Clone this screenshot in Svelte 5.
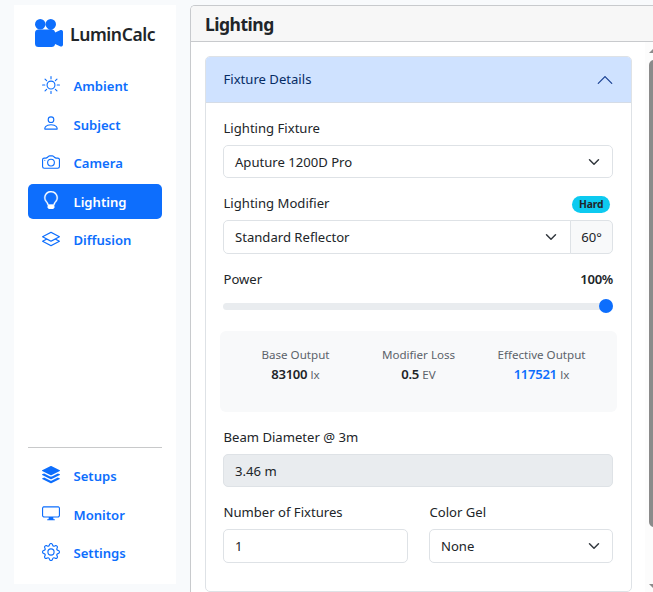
<script lang="ts">
  type NavItem = { label: string; icon: string[] };

  const mainNav: NavItem[] = [
    {
      label: 'Ambient',
      icon: [
        'M8 11a3 3 0 1 1 0-6 3 3 0 0 1 0 6m0 1a4 4 0 1 0 0-8 4 4 0 0 0 0 8M8 0a.5.5 0 0 1 .5.5v2a.5.5 0 0 1-1 0v-2A.5.5 0 0 1 8 0m0 13a.5.5 0 0 1 .5.5v2a.5.5 0 0 1-1 0v-2A.5.5 0 0 1 8 13m8-5a.5.5 0 0 1-.5.5h-2a.5.5 0 0 1 0-1h2a.5.5 0 0 1 .5.5M3 8a.5.5 0 0 1-.5.5h-2a.5.5 0 0 1 0-1h2A.5.5 0 0 1 3 8m10.657-5.657a.5.5 0 0 1 0 .707l-1.414 1.415a.5.5 0 1 1-.707-.708l1.414-1.414a.5.5 0 0 1 .707 0m-9.193 9.193a.5.5 0 0 1 0 .707L3.05 13.657a.5.5 0 0 1-.707-.707l1.414-1.414a.5.5 0 0 1 .707 0m9.193 2.121a.5.5 0 0 1-.707 0l-1.414-1.414a.5.5 0 0 1 .707-.707l1.414 1.414a.5.5 0 0 1 0 .707M4.464 4.465a.5.5 0 0 1-.707 0L2.343 3.05a.5.5 0 1 1 .707-.707l1.414 1.414a.5.5 0 0 1 0 .708',
      ],
    },
    {
      label: 'Subject',
      icon: [
        'M8 8a3 3 0 1 0 0-6 3 3 0 0 0 0 6m2-3a2 2 0 1 1-4 0 2 2 0 0 1 4 0m4 8c0 1-1 1-1 1H3s-1 0-1-1 1-4 6-4 6 3 6 4m-1-.004c-.001-.246-.154-.986-.832-1.664C11.516 10.68 10.289 10 8 10s-3.516.68-4.168 1.332c-.678.678-.83 1.418-.832 1.664z',
      ],
    },
    {
      label: 'Camera',
      icon: [
        'M15 12a1 1 0 0 1-1 1H2a1 1 0 0 1-1-1V6a1 1 0 0 1 1-1h1.172a3 3 0 0 0 2.12-.879l.83-.828A1 1 0 0 1 6.827 3h2.344a1 1 0 0 1 .707.293l.828.828A3 3 0 0 0 12.828 5H14a1 1 0 0 1 1 1zM2 4a2 2 0 0 0-2 2v6a2 2 0 0 0 2 2h12a2 2 0 0 0 2-2V6a2 2 0 0 0-2-2h-1.172a2 2 0 0 1-1.414-.586l-.828-.828A2 2 0 0 0 9.172 2H6.828a2 2 0 0 0-1.414.586l-.828.828A2 2 0 0 1 3.172 4z',
        'M8 11a2.5 2.5 0 1 1 0-5 2.5 2.5 0 0 1 0 5m0 1a3.5 3.5 0 1 0 0-7 3.5 3.5 0 0 0 0 7M3 6.5a.5.5 0 1 1-1 0 .5.5 0 0 1 1 0',
      ],
    },
    {
      label: 'Lighting',
      icon: [
        'M2 6a6 6 0 1 1 10.174 4.31c-.203.196-.359.4-.453.619l-.762 1.769A.5.5 0 0 1 10.5 13a.5.5 0 0 1 0 1 .5.5 0 0 1 0 1l-.224.447a1 1 0 0 1-.894.553H6.618a1 1 0 0 1-.894-.553L5.5 15a.5.5 0 0 1 0-1 .5.5 0 0 1 0-1 .5.5 0 0 1-.46-.302l-.761-1.77a2 2 0 0 0-.453-.618A5.98 5.98 0 0 1 2 6m6-5a5 5 0 0 0-3.479 8.592c.263.254.514.564.676.941L5.83 12h4.342l.632-1.467c.162-.377.413-.687.676-.941A5 5 0 0 0 8 1',
      ],
    },
    {
      label: 'Diffusion',
      icon: [
        'M8.235 1.559a.5.5 0 0 0-.47 0l-7.5 4a.5.5 0 0 0 0 .882L3.188 8 .264 9.559a.5.5 0 0 0 0 .882l7.5 4a.5.5 0 0 0 .47 0l7.5-4a.5.5 0 0 0 0-.882L12.813 8l2.922-1.559a.5.5 0 0 0 0-.882zm3.515 7.008L14.438 10 8 13.433 1.562 10 4.25 8.567l3.515 1.874a.5.5 0 0 0 .47 0zM8 9.433 1.562 6 8 2.567 14.438 6z',
      ],
    },
  ];

  const footerNav: NavItem[] = [
    {
      label: 'Setups',
      icon: [
        'm14.12 10.163 1.715.858c.22.11.22.424 0 .534L8.267 15.34a.6.6 0 0 1-.534 0L.165 11.555a.299.299 0 0 1 0-.534l1.716-.858 5.317 2.659c.505.252 1.1.252 1.604 0l5.317-2.66zM7.733.063a.6.6 0 0 1 .534 0l7.568 3.784a.3.3 0 0 1 0 .535L8.267 8.165a.6.6 0 0 1-.534 0L.165 4.382a.299.299 0 0 1 0-.535z',
        'm14.12 6.576 1.715.858c.22.11.22.424 0 .534l-7.568 3.784a.6.6 0 0 1-.534 0L.165 7.968a.299.299 0 0 1 0-.534l1.716-.858 5.317 2.659c.505.252 1.1.252 1.604 0z',
      ],
    },
    {
      label: 'Monitor',
      icon: [
        'M0 4s0-2 2-2h12s2 0 2 2v6s0 2-2 2h-4q0 1 .25 1.5H11a.5.5 0 0 1 0 1H5a.5.5 0 0 1 0-1h.75Q6 13 6 12H2s-2 0-2-2zm1.398-.855a.76.76 0 0 0-.254.302A1.5 1.5 0 0 0 1 4.01V10c0 .325.078.502.145.602q.105.156.302.254a1.5 1.5 0 0 0 .538.143L2.01 11H14c.325 0 .502-.078.602-.145a.76.76 0 0 0 .254-.302 1.5 1.5 0 0 0 .143-.538L15 9.99V4c0-.325-.078-.502-.145-.602a.76.76 0 0 0-.302-.254A1.5 1.5 0 0 0 13.99 3H2c-.325 0-.502.078-.602.145',
      ],
    },
    {
      label: 'Settings',
      icon: [
        'M8 4.754a3.246 3.246 0 1 0 0 6.492 3.246 3.246 0 0 0 0-6.492M5.754 8a2.246 2.246 0 1 1 4.492 0 2.246 2.246 0 0 1-4.492 0',
        'M9.796 1.343c-.527-1.79-3.065-1.79-3.592 0l-.094.319a.873.873 0 0 1-1.255.52l-.292-.16c-1.64-.892-3.433.902-2.54 2.541l.159.292a.873.873 0 0 1-.52 1.255l-.319.094c-1.79.527-1.79 3.065 0 3.592l.319.094a.873.873 0 0 1 .52 1.255l-.16.292c-.892 1.64.901 3.434 2.541 2.54l.292-.159a.873.873 0 0 1 1.255.52l.094.319c.527 1.79 3.065 1.79 3.592 0l.094-.319a.873.873 0 0 1 1.255-.52l.292.16c1.64.893 3.434-.902 2.54-2.541l-.159-.292a.873.873 0 0 1 .52-1.255l.319-.094c1.79-.527 1.79-3.065 0-3.592l-.319-.094a.873.873 0 0 1-.52-1.255l.16-.292c.893-1.64-.902-3.433-2.541-2.54l-.292.159a.873.873 0 0 1-1.255-.52zm-2.633.283c.246-.835 1.428-.835 1.674 0l.094.319a1.873 1.873 0 0 0 2.693 1.115l.291-.16c.764-.415 1.6.42 1.184 1.185l-.159.292a1.873 1.873 0 0 0 1.116 2.692l.318.094c.835.246.835 1.428 0 1.674l-.319.094a1.873 1.873 0 0 0-1.115 2.693l.16.291c.415.764-.42 1.6-1.185 1.184l-.291-.159a1.873 1.873 0 0 0-2.693 1.116l-.094.318c-.246.835-1.428.835-1.674 0l-.094-.319a1.873 1.873 0 0 0-2.692-1.115l-.292.16c-.764.415-1.6-.42-1.184-1.185l.159-.291A1.873 1.873 0 0 0 1.945 8.93l-.319-.094c-.835-.246-.835-1.428 0-1.674l.319-.094A1.873 1.873 0 0 0 3.06 4.377l-.16-.292c-.415-.764.42-1.6 1.185-1.184l.292.159a1.873 1.873 0 0 0 2.692-1.115z',
      ],
    },
  ];

  const stats = [
    { label: 'Base Output', value: '83100', unit: 'lx', accent: false },
    { label: 'Modifier Loss', value: '0.5', unit: 'EV', accent: false },
    { label: 'Effective Output', value: '117521', unit: 'lx', accent: true },
  ];

  let active = $state('Lighting');
  let power = $state(100);
  let fixtures = $state(1);
</script>

{#snippet navLink(item: NavItem)}
  <button
    type="button"
    class="nav-link"
    class:active={active === item.label}
    onclick={() => (active = item.label)}
  >
    <svg viewBox="0 0 16 16" aria-hidden="true">
      {#each item.icon as d}
        <path {d} />
      {/each}
    </svg>
    <span>{item.label}</span>
  </button>
{/snippet}

{#snippet chevron()}
  <svg class="chevron" viewBox="0 0 16 16" aria-hidden="true">
    <path d="m2 5 6 6 6-6" />
  </svg>
{/snippet}

<div class="app">
  <aside class="sidebar">
    <div class="brand">
      <svg viewBox="0 0 16 16" aria-hidden="true">
        <path d="M6 3a3 3 0 1 1-6 0 3 3 0 0 1 6 0" />
        <path
          d="M9 6a3 3 0 1 1 0-6 3 3 0 0 1 0 6M9 6h.5a2 2 0 0 1 1.983 1.738l3.11-1.382A1 1 0 0 1 16 7.269v7.462a1 1 0 0 1-1.406.913l-3.111-1.382A2 2 0 0 1 9.5 16H2a2 2 0 0 1-2-2V8a2 2 0 0 1 2-2z"
        />
      </svg>
      <span>LuminCalc</span>
    </div>
    <nav>
      {#each mainNav as item}
        {@render navLink(item)}
      {/each}
    </nav>
    <nav class="nav-footer">
      {#each footerNav as item}
        {@render navLink(item)}
      {/each}
    </nav>
  </aside>

  <main class="card">
    <h1 class="card-header">Lighting</h1>
    <div class="scroll">
      <section class="accordion">
        <header class="accordion-header">
          <span>Fixture Details</span>
          <svg viewBox="0 0 16 16" aria-hidden="true"><path d="m2 11 6-6 6 6" /></svg>
        </header>
        <div class="accordion-body">
          <div class="label">Lighting Fixture</div>
          <div class="control select">
            <span>Aputure 1200D Pro</span>
            {@render chevron()}
          </div>

          <div class="label">
            <span>Lighting Modifier</span>
            <span class="badge">Hard</span>
          </div>
          <div class="input-group">
            <div class="control select">
              <span>Standard Reflector</span>
              {@render chevron()}
            </div>
            <span class="addon">60°</span>
          </div>

          <div class="label">
            <span>Power</span>
            <strong>{power}%</strong>
          </div>
          <input class="range" type="range" min="0" max="100" aria-label="Power" bind:value={power} />

          <div class="stats">
            {#each stats as stat}
              <div class="stat">
                <div class="stat-label">{stat.label}</div>
                <div class="stat-value">
                  <strong class:accent={stat.accent}>{stat.value}</strong>
                  <small>{stat.unit}</small>
                </div>
              </div>
            {/each}
          </div>

          <div class="label">Beam Diameter @ 3m</div>
          <div class="control readonly">3.46 m</div>

          <div class="row">
            <div>
              <div class="label">Number of Fixtures</div>
              <input class="control tall" type="text" aria-label="Number of Fixtures" bind:value={fixtures} />
            </div>
            <div>
              <div class="label">Color Gel</div>
              <div class="control select tall">
                <span>None</span>
                {@render chevron()}
              </div>
            </div>
          </div>
        </div>
      </section>
      <div class="scrollbar">
        <span class="arrow up"></span>
        <span class="thumb"></span>
        <span class="arrow down"></span>
      </div>
    </div>
  </main>
</div>

<style>
  :global(body) {
    background: #f8fafc;
    overflow: hidden;
  }

  .app,
  .app * {
    box-sizing: border-box;
  }

  .app {
    display: flex;
    gap: 14px;
    height: 592px;
    padding: 5px 0 0 14px;
    overflow: hidden;
    font-family: 'Noto Sans', 'Open Sans', sans-serif;
    font-size: 13.1px;
    color: #212529;
  }

  .sidebar {
    display: flex;
    flex-direction: column;
    flex: none;
    width: 162px;
    height: 579px;
    padding: 14px;
    background: #fff;
  }

  .brand {
    display: flex;
    align-items: center;
    gap: 7px;
    height: 28px;
    margin: 0 0 21.5px 7px;
    font-size: 17.5px;
    font-weight: 600;
    letter-spacing: -0.4px;
  }

  .brand span {
    padding-top: 2px;
  }

  .brand svg {
    width: 28px;
    height: 28px;
    fill: #0d6efd;
  }

  nav {
    display: flex;
    flex-direction: column;
    gap: 3.5px;
  }

  .nav-footer {
    margin: auto 0 -0.5px;
    padding-top: 10.5px;
    border-top: 1px solid #c8c9ca;
  }

  .nav-link {
    display: flex;
    align-items: center;
    gap: 13.5px;
    height: 35px;
    padding: 0 14px;
    border: 0;
    border-radius: 5px;
    background: transparent;
    color: #0d6efd;
    font: inherit;
    font-weight: 600;
    text-align: left;
  }

  .nav-link svg {
    width: 18px;
    height: 18px;
    margin-bottom: 3px;
    fill: currentColor;
  }

  .nav-link.active {
    background: #0d6efd;
    color: #fff;
  }

  .nav-link.active svg {
    stroke: currentColor;
    stroke-width: 0.3;
  }

  .card {
    display: flex;
    flex-direction: column;
    flex: 1;
    min-width: 0;
    border: 1px solid #c8cacd;
    border-width: 1px 0 0 1px;
    border-radius: 5px 0 0 0;
    background: #fff;
    overflow: hidden;
  }

  .card-header {
    flex: none;
    height: 36px;
    margin: 0;
    padding-left: 14px;
    border-bottom: 1px solid #c8cacd;
    background: #f7f7f7;
    font-size: 17.5px;
    font-weight: 700;
    letter-spacing: -0.5px;
    line-height: 37px;
  }

  .scroll {
    display: flex;
    flex: 1;
    padding: 14px 0 0 14px;
  }

  .accordion {
    display: flex;
    flex-direction: column;
    flex: none;
    width: 427px;
    height: 536px;
    border: 1px solid #dee2e6;
    border-radius: 5px;
  }

  .accordion-header {
    display: flex;
    align-items: center;
    justify-content: space-between;
    height: 46px;
    padding: 0 17.5px;
    border-bottom: 1px solid #d5dce6;
    border-radius: 4px 4px 0 0;
    background: #cfe2ff;
    color: #052c65;
  }

  .accordion-header span {
    padding-bottom: 1px;
  }

  .accordion-header svg {
    width: 18px;
    height: 18px;
    fill: none;
    stroke: #1d4495;
    stroke-width: 1.1;
    stroke-linecap: round;
  }

  .accordion-body {
    padding: 0 18px 0 17px;
  }

  .label {
    display: flex;
    align-items: center;
    justify-content: space-between;
    height: 20px;
    margin: 15px 0 7px;
    padding-left: 0.5px;
  }

  .label strong {
    font-weight: 600;
    letter-spacing: -0.3px;
  }

  .badge {
    height: 17px;
    margin: 3px 3px 0 0;
    padding: 0 6.5px;
    border-radius: 9px;
    background: #0dcaf0;
    font-size: 10.3px;
    font-weight: 700;
    letter-spacing: -0.1px;
    line-height: 16px;
  }

  .control {
    display: flex;
    align-items: center;
    width: 100%;
    height: 33px;
    padding: 0 11px;
    border: 1px solid #dee2e6;
    border-radius: 5px;
    background: #fff;
    color: inherit;
    font: inherit;
  }

  .control.tall,
  .input-group .control {
    height: 34px;
  }

  .select {
    justify-content: space-between;
    padding-right: 12px;
  }

  .chevron {
    width: 12px;
    height: 12px;
    fill: none;
    stroke: #343a40;
    stroke-width: 2;
    stroke-linecap: round;
    stroke-linejoin: round;
  }

  .input-group {
    display: flex;
  }

  .input-group .control {
    padding-right: 13px;
    border-radius: 5px 0 0 5px;
  }

  .addon {
    flex: none;
    width: 43px;
    height: 34px;
    margin-left: -1px;
    border: 1px solid #dee2e6;
    border-radius: 0 5px 5px 0;
    background: #f8f9fa;
    line-height: 32px;
    text-align: center;
  }

  .range {
    display: block;
    width: 100%;
    height: 14px;
    margin: 10px 0 18px;
    appearance: none;
    background: transparent;
  }

  .range::-webkit-slider-runnable-track {
    height: 7px;
    border-radius: 4px;
    background: #e9ecef;
  }

  .range::-webkit-slider-thumb {
    appearance: none;
    width: 14px;
    height: 14px;
    margin-top: -3.5px;
    border-radius: 50%;
    background: #0d6efd;
  }

  .stats {
    display: grid;
    grid-template-columns: repeat(3, 1fr);
    height: 81px;
    margin: 0 -4px 0 -3px;
    padding: 14px;
    border-radius: 6px;
    background: #f8f9fa;
    text-align: center;
  }

  .stat-label {
    color: #5c636a;
    font-size: 11.6px;
    line-height: 19px;
  }

  .stat-value {
    line-height: 20px;
  }

  .stat-value strong {
    font-weight: 600;
    letter-spacing: -0.3px;
  }

  .stat-value .accent {
    color: #0d6efd;
  }

  .stat-value small {
    color: #5c636a;
    font-size: 11.6px;
  }

  .readonly {
    background: #e9ecef;
  }

  .row {
    display: grid;
    grid-template-columns: 185px 184px;
    justify-content: space-between;
  }

  .scrollbar {
    display: flex;
    flex-direction: column;
    flex: none;
    width: 8px;
    height: 550px;
    margin: -14px 0 0 13px;
    padding: 7px 0 4px 4px;
    background: #fcfcfc;
  }

  .thumb {
    width: 12px;
    height: 467px;
    margin: 7px 0 auto;
    border-radius: 5px;
    background: #8b8b8b;
  }

  .arrow {
    border: 4px solid transparent;
    border-width: 0 4px;
    width: 8px;
  }

  .up {
    border-bottom: 4px solid #8b8b8b;
  }

  .down {
    border-top: 4px solid #8b8b8b;
  }
</style>
